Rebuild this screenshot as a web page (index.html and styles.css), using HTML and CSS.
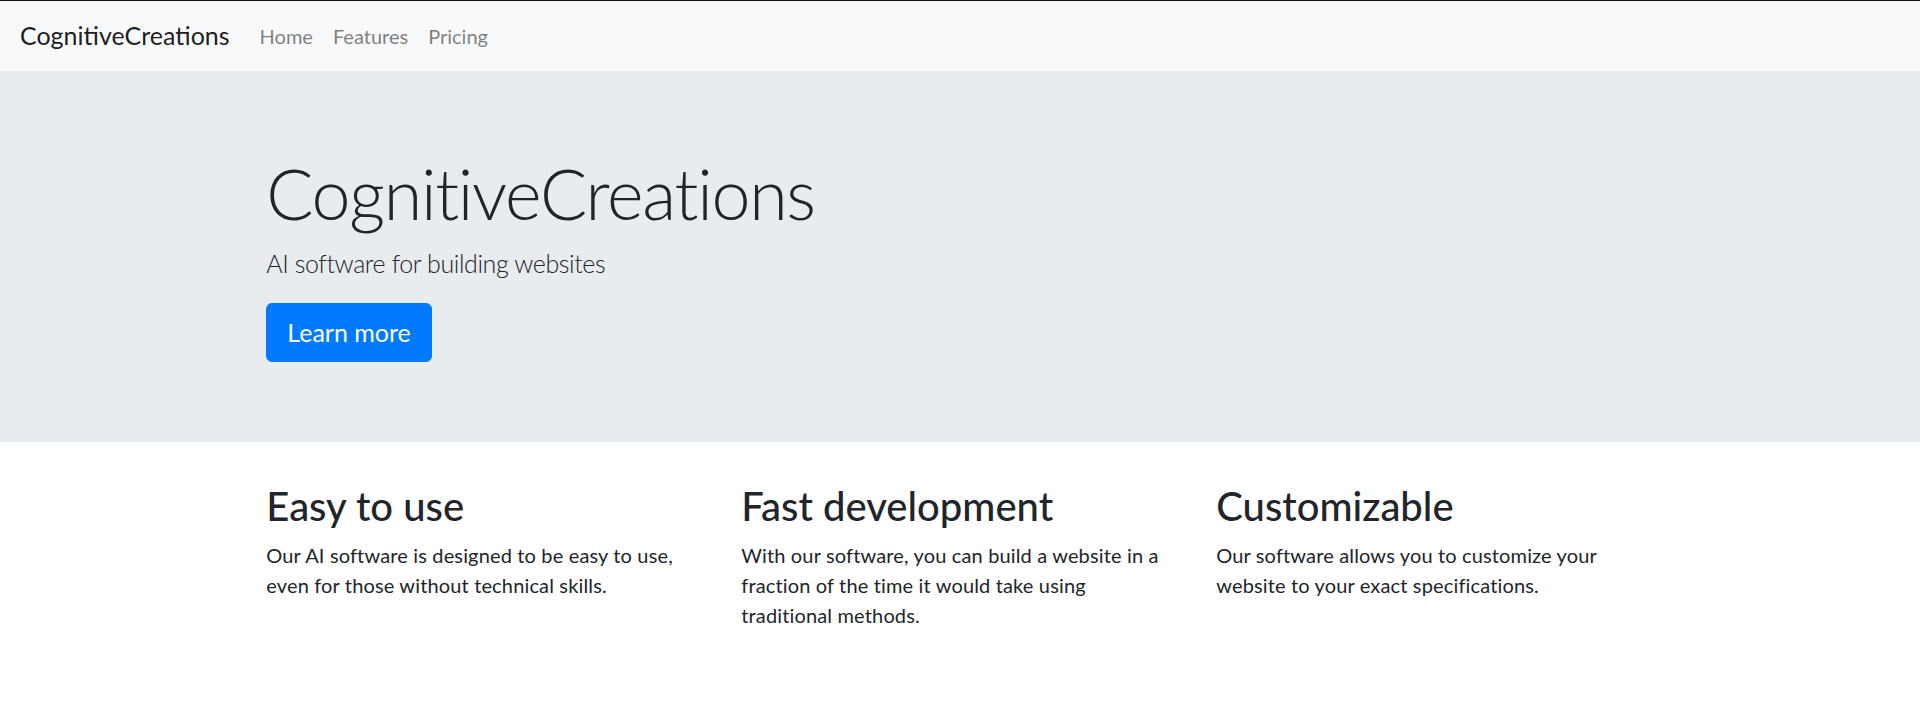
FILE: index.html
```html
<!DOCTYPE html>
<html lang="en">
<head>
<meta charset="utf-8">
<title>CognitiveCreations</title>
<link rel="stylesheet" href="styles.css">
</head>
<body>
<nav class="navbar">
  <a class="brand" href="#">CognitiveCreations</a>
  <ul class="nav">
    <li><a class="nav-link" href="#">Home</a></li>
    <li><a class="nav-link" href="#">Features</a></li>
    <li><a class="nav-link" href="#">Pricing</a></li>
  </ul>
</nav>
<header class="jumbotron">
  <div class="container">
    <h1 class="display">CognitiveCreations</h1>
    <p class="lead">AI software for building websites</p>
    <a class="btn" href="#">Learn more</a>
  </div>
</header>
<main class="container">
  <div class="row">
    <section class="col">
      <h2>Easy to use</h2>
      <p>Our AI software is designed to be easy to use, even for those without technical skills.</p>
    </section>
    <section class="col">
      <h2>Fast development</h2>
      <p>With our software, you can build a website in a fraction of the time it would take using traditional methods.</p>
    </section>
    <section class="col">
      <h2>Customizable</h2>
      <p>Our software allows you to customize your website to your exact specifications.</p>
    </section>
  </div>
</main>
</body>
</html>
```
FILE: styles.css
```css
*{box-sizing:border-box}
html,body{margin:0;padding:0}
body{
  font-family:Lato,"Liberation Sans",sans-serif;
  font-size:20px;
  line-height:1.5;
  color:#212529;
  background:#fff;
  border-top:1px solid #111;
}
a{text-decoration:none}
.navbar{
  display:flex;
  align-items:center;
  padding:10px 20px;
  background:#f8f9fa;
}
.brand{
  font-size:25px;
  line-height:37.5px;
  padding:6.25px 0;
  margin-right:20px;
  color:rgba(0,0,0,.9);
  white-space:nowrap;
}
.nav{
  display:flex;
  list-style:none;
  margin:0;
  padding:0;
}
.nav-link{
  display:block;
  padding:10px 10px;
  line-height:30px;
  color:rgba(0,0,0,.5);
}
.jumbotron{
  background:#e9ecef;
  padding:80px 0;
  margin-bottom:40px;
}
.container{
  width:1425px;
  margin:0 auto;
  padding:0 18.75px;
}
.display{
  margin:0 0 10px;
  font-size:70px;
  font-weight:300;
  line-height:1.2;
  letter-spacing:-1.3px;
}
.lead{
  margin:0 0 20px;
  font-size:25px;
  font-weight:300;
  line-height:1.5;
  letter-spacing:-0.4px;
}
.btn{
  display:inline-block;
  padding:10px 20px;
  font-size:25px;
  line-height:1.5;
  color:#fff;
  background:#007bff;
  border:1px solid #007bff;
  border-radius:6px;
}
.row{
  display:flex;
  margin:0 -18.75px;
}
.col{
  flex:0 0 33.3333%;
  padding:0 18.75px;
}
.col h2{
  margin:0 0 10px;
  font-size:40px;
  font-weight:500;
  line-height:1.2;
}
.col p{
  margin:0 0 20px;
  letter-spacing:0.15px;
}
```
